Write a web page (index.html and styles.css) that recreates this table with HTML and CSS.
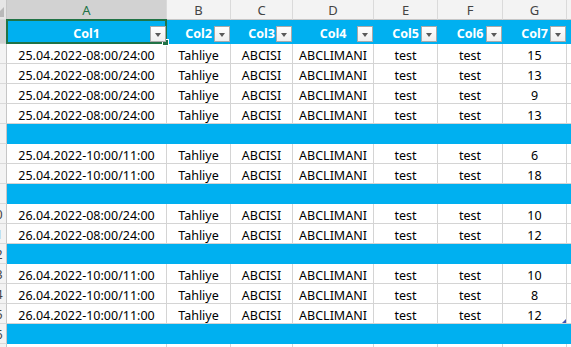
FILE: index.html
```html
<!DOCTYPE html>
<html>
<head>
<meta charset="utf-8">
<link rel="stylesheet" href="styles.css">
</head>
<body>
<div class="sheet">
  <div class="row colhead">
    <div class="rh corner"></div>
    <div class="ch sel">A</div><div class="ch">B</div><div class="ch">C</div><div class="ch">D</div><div class="ch">E</div><div class="ch">F</div><div class="ch">G</div><div class="ch">H</div>
  </div>
  <div class="row thead">
    <div class="rh sel">1</div>
    <div class="c th a1">Col1<span class="dd"></span><span class="selbox"></span></div>
    <div class="c th">Col2<span class="dd"></span></div>
    <div class="c th">Col3<span class="dd"></span></div>
    <div class="c th">Col4<span class="dd"></span></div>
    <div class="c th">Col5<span class="dd"></span></div>
    <div class="c th">Col6<span class="dd"></span></div>
    <div class="c th">Col7<span class="dd"></span></div>
    <div class="c th"></div>
  </div>
  <div class="row"><div class="rh">2</div><div class="c">25.04.2022-08:00/24:00</div><div class="c">Tahliye</div><div class="c">ABCISI</div><div class="c">ABCLIMANI</div><div class="c">test</div><div class="c">test</div><div class="c">15</div><div class="c"></div></div>
  <div class="row"><div class="rh">3</div><div class="c">25.04.2022-08:00/24:00</div><div class="c">Tahliye</div><div class="c">ABCISI</div><div class="c">ABCLIMANI</div><div class="c">test</div><div class="c">test</div><div class="c">13</div><div class="c"></div></div>
  <div class="row"><div class="rh">4</div><div class="c">25.04.2022-08:00/24:00</div><div class="c">Tahliye</div><div class="c">ABCISI</div><div class="c">ABCLIMANI</div><div class="c">test</div><div class="c">test</div><div class="c">9</div><div class="c"></div></div>
  <div class="row"><div class="rh">5</div><div class="c">25.04.2022-08:00/24:00</div><div class="c">Tahliye</div><div class="c">ABCISI</div><div class="c">ABCLIMANI</div><div class="c">test</div><div class="c">test</div><div class="c">13</div><div class="c"></div></div>
  <div class="row band"><div class="rh">6</div><div class="c"></div><div class="c"></div><div class="c"></div><div class="c"></div><div class="c"></div><div class="c"></div><div class="c"></div><div class="c"></div></div>
  <div class="row"><div class="rh">7</div><div class="c">25.04.2022-10:00/11:00</div><div class="c">Tahliye</div><div class="c">ABCISI</div><div class="c">ABCLIMANI</div><div class="c">test</div><div class="c">test</div><div class="c">6</div><div class="c"></div></div>
  <div class="row"><div class="rh">8</div><div class="c">25.04.2022-10:00/11:00</div><div class="c">Tahliye</div><div class="c">ABCISI</div><div class="c">ABCLIMANI</div><div class="c">test</div><div class="c">test</div><div class="c">18</div><div class="c"></div></div>
  <div class="row band"><div class="rh">9</div><div class="c"></div><div class="c"></div><div class="c"></div><div class="c"></div><div class="c"></div><div class="c"></div><div class="c"></div><div class="c"></div></div>
  <div class="row"><div class="rh">10</div><div class="c">26.04.2022-08:00/24:00</div><div class="c">Tahliye</div><div class="c">ABCISI</div><div class="c">ABCLIMANI</div><div class="c">test</div><div class="c">test</div><div class="c">10</div><div class="c"></div></div>
  <div class="row"><div class="rh">11</div><div class="c">26.04.2022-08:00/24:00</div><div class="c">Tahliye</div><div class="c">ABCISI</div><div class="c">ABCLIMANI</div><div class="c">test</div><div class="c">test</div><div class="c">12</div><div class="c"></div></div>
  <div class="row band"><div class="rh">12</div><div class="c"></div><div class="c"></div><div class="c"></div><div class="c"></div><div class="c"></div><div class="c"></div><div class="c"></div><div class="c"></div></div>
  <div class="row"><div class="rh">13</div><div class="c">26.04.2022-10:00/11:00</div><div class="c">Tahliye</div><div class="c">ABCISI</div><div class="c">ABCLIMANI</div><div class="c">test</div><div class="c">test</div><div class="c">10</div><div class="c"></div></div>
  <div class="row"><div class="rh">14</div><div class="c">26.04.2022-10:00/11:00</div><div class="c">Tahliye</div><div class="c">ABCISI</div><div class="c">ABCLIMANI</div><div class="c">test</div><div class="c">test</div><div class="c">8</div><div class="c"></div></div>
  <div class="row"><div class="rh">15</div><div class="c">26.04.2022-10:00/11:00</div><div class="c">Tahliye</div><div class="c">ABCISI</div><div class="c">ABCLIMANI</div><div class="c">test</div><div class="c">test</div><div class="c tend">12</div><div class="c"></div></div>
  <div class="row band"><div class="rh">16</div><div class="c"></div><div class="c"></div><div class="c"></div><div class="c"></div><div class="c"></div><div class="c"></div><div class="c"></div><div class="c"></div></div>
  <div class="row"><div class="rh">17</div><div class="c"></div><div class="c"></div><div class="c"></div><div class="c"></div><div class="c"></div><div class="c"></div><div class="c"></div><div class="c"></div></div>
</div>
</body>
</html>
```

FILE: styles.css
```css
html, body {
  margin: 0;
  padding: 0;
  background: #ffffff;
  overflow: hidden;
}

body {
  width: 571px;
  height: 347px;
  font-family: "Noto Sans", "Open Sans", sans-serif;
  font-size: 12.5px;
  color: #000;
}

.sheet {
  margin-left: -15px;
  width: 600px;
}

.row {
  display: grid;
  grid-template-columns: 22px 160px 64px 62px 81px 64px 65px 64px 64px;
  height: 20px;
}

.row > div {
  box-sizing: border-box;
  height: 100%;
  border-right: 1px solid #d4d4d4;
  border-bottom: 1px solid #d4d4d4;
  white-space: nowrap;
  overflow: hidden;
  text-align: center;
  line-height: 19px;
  padding-top: 2px;
}

/* row headers */
.rh {
  background: #f3f3f3;
  color: #444;
}
.row > .rh {
  border-right-color: #c6c6c6;
  border-bottom-color: #dadada;
  padding-top: 1px;
}
.row > .rh.sel {
  background: #d2d2d2;
  color: #217346;
  padding-top: 4px;
}

/* column letters */
.colhead > div {
  background: #f3f3f3;
  color: #444;
  padding-top: 1px;
  font-size: 13px;
}
.colhead > .ch {
  border-right-color: #dadada;
  border-bottom-color: #c6c6c6;
}
.colhead > .ch.sel {
  background: #d2d2d2;
  color: #217346;
  border-bottom-color: #217346;
}
.colhead > .corner {
  position: relative;
  background: #e6e6e6;
}
.corner::after {
  content: "";
  position: absolute;
  right: 2px;
  bottom: 2px;
  width: 0;
  height: 0;
  border-left: 10px solid transparent;
  border-bottom: 10px solid #b9b9b9;
}

/* table header row */
.thead {
  height: 24px;
}
.thead > .th {
  position: relative;
  overflow: visible;
  background: #00b0f0;
  border-color: #00b0f0;
  color: #ffffff;
  font-weight: bold;
  padding-top: 4px;
}
.thead > .a1 {
  z-index: 2;
}
.dd {
  position: absolute;
  right: 0;
  bottom: 1px;
  width: 16px;
  height: 16px;
  box-sizing: border-box;
  border: 1px solid #a9a9a9;
  background: linear-gradient(#ffffff, #eeeeee);
  z-index: 3;
}
.dd::after {
  content: "";
  position: absolute;
  left: 4px;
  top: 6px;
  width: 0;
  height: 0;
  border-left: 3.5px solid transparent;
  border-right: 3.5px solid transparent;
  border-top: 4px solid #595959;
}
.selbox {
  position: absolute;
  left: -1px;
  top: -1px;
  right: -1px;
  bottom: -1px;
  border: 2px solid #217346;
  z-index: 2;
}
.selbox::after {
  content: "";
  position: absolute;
  right: -3px;
  bottom: -3px;
  width: 5px;
  height: 5px;
  background: #217346;
  box-shadow: 0 0 0 1px #ffffff;
}

/* blue band rows */
.band > .c {
  background: #00b0f0;
  border-color: #00b0f0;
}

/* table resize handle */
.row > .tend {
  position: relative;
}
.tend::after {
  content: "";
  position: absolute;
  right: 0;
  bottom: 0;
  width: 0;
  height: 0;
  border-left: 4px solid transparent;
  border-bottom: 4px solid #4054b2;
}
```
